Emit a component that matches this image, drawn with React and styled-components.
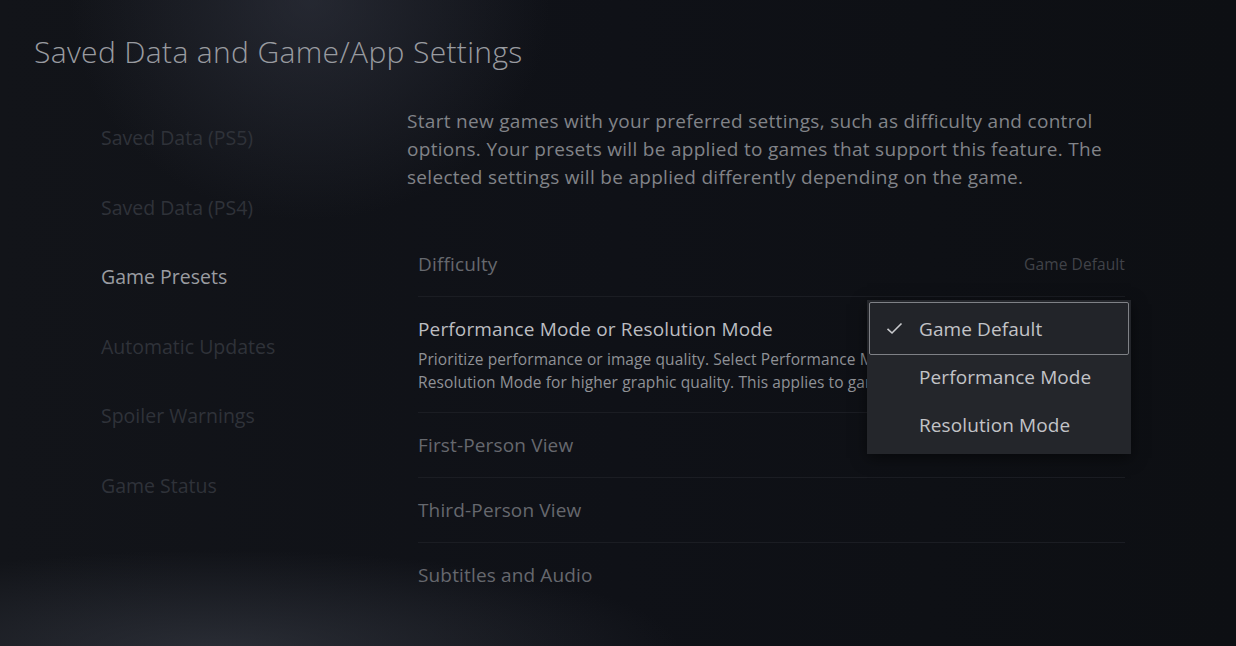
import React from "react";
import styled, { createGlobalStyle } from "styled-components";

const GlobalStyle = createGlobalStyle`
  html, body {
    margin: 0;
    padding: 0;
    background: #0f1116;
  }
  body {
    font-family: "Open Sans", "Liberation Sans", sans-serif;
    -webkit-font-smoothing: antialiased;
  }
`;

const sideItems = [
  { label: "Saved Data (PS5)" },
  { label: "Saved Data (PS4)" },
  { label: "Game Presets", active: true },
  { label: "Automatic Updates" },
  { label: "Spoiler Warnings" },
  { label: "Game Status" },
];

const options = ["Game Default", "Performance Mode", "Resolution Mode"];

const App = () => {
  return (
    <>
      <GlobalStyle />
      <Screen>
        <Title>Saved Data and Game/App Settings</Title>
        <Body>
          <Sidebar>
            {sideItems.map((item) => (
              <SideItem key={item.label} $active={item.active}>
                {item.label}
              </SideItem>
            ))}
          </Sidebar>
          <Main>
            <Intro>
              Start new games with your preferred settings, such as difficulty
              and control options. Your presets will be applied to games that
              support this feature. The selected settings will be applied
              differently depending on the game.
            </Intro>
            <Rows>
              <Row>
                <RowLabel>Difficulty</RowLabel>
                <RowValue>Game Default</RowValue>
              </Row>
              <Row $tall>
                <RowText>
                  <RowLabel $bright>Performance Mode or Resolution Mode</RowLabel>
                  <RowDesc>
                    Prioritize performance or image quality. Select Performance
                    Mode for higher frame rates, or Resolution Mode for higher
                    graphic quality. This applies to games that support it.
                  </RowDesc>
                </RowText>
                <Dropdown>
                  {options.map((opt, i) => (
                    <Option key={opt} $selected={i === 0}>
                      <Check>
                        {i === 0 && (
                          <svg width="17" height="13" viewBox="0 0 17 13">
                            <path
                              d="M1.5 6.8 L6 11 L15.5 1.5"
                              fill="none"
                              stroke="#c9cacd"
                              strokeWidth="1.6"
                            />
                          </svg>
                        )}
                      </Check>
                      {opt}
                    </Option>
                  ))}
                </Dropdown>
              </Row>
              <Row>
                <RowLabel>First-Person View</RowLabel>
              </Row>
              <Row>
                <RowLabel>Third-Person View</RowLabel>
              </Row>
              <Row $last>
                <RowLabel>Subtitles and Audio</RowLabel>
              </Row>
            </Rows>
          </Main>
        </Body>
      </Screen>
    </>
  );
};

const Screen = styled.div`
  width: 1236px;
  height: 646px;
  overflow: hidden;
  box-sizing: border-box;
  padding-top: 32px;
  background:
    radial-gradient(ellipse 240px 220px at 310px 0px, rgba(62, 66, 80, 0.45), transparent 100%),
    radial-gradient(ellipse 460px 100px at 220px 650px, rgba(58, 62, 72, 0.6), transparent 100%),
    linear-gradient(90deg, #121419 0%, #0f1117 50%, #0d0f13 100%);
`;

const Title = styled.h1`
  margin: 0 0 0 34px;
  font-size: 30px;
  font-weight: 300;
  line-height: 40px;
  color: #999ba0;
  letter-spacing: 0.35px;
`;

const Body = styled.div`
  display: grid;
  grid-template-columns: 407px 729px;
  margin-top: 35px;
`;

const Sidebar = styled.nav`
  display: flex;
  flex-direction: column;
  padding-left: 101px;
  padding-top: 18px;
  gap: 43.5px;
`;

const SideItem = styled.div`
  font-size: 19.5px;
  line-height: 26px;
  color: ${(p) => (p.$active ? "#9a9ca1" : "#2f3239")};
`;

const Main = styled.div`
  display: flex;
  flex-direction: column;
`;

const Intro = styled.p`
  margin: 0;
  font-size: 19px;
  line-height: 28px;
  color: #818388;
  letter-spacing: 0.3px;
  max-width: 700px;
`;

const Rows = styled.div`
  display: flex;
  flex-direction: column;
  margin: 41px 11px 0;
`;

const Row = styled.div`
  position: relative;
  display: flex;
  align-items: ${(p) => (p.$tall ? "flex-start" : "center")};
  justify-content: space-between;
  height: ${(p) => (p.$tall ? "116px" : "65px")};
  box-sizing: border-box;
  padding-top: ${(p) => (p.$tall ? "19px" : "0")};
  border-bottom: 1px solid ${(p) => (p.$last ? "transparent" : "#1b1d23")};
`;

const RowText = styled.div`
  display: flex;
  flex-direction: column;
  width: 100%;
`;

const RowLabel = styled.div`
  font-size: 19px;
  line-height: 26px;
  color: ${(p) => (p.$bright ? "#bcbdc1" : "#66686e")};
  letter-spacing: 0.15px;
`;

const RowDesc = styled.div`
  margin-top: 6px;
  font-size: 15.5px;
  line-height: 23px;
  color: #8f9196;
  letter-spacing: 0.1px;
`;

const RowValue = styled.div`
  font-size: 15.5px;
  color: #414349;
  letter-spacing: 0.1px;
`;

const Dropdown = styled.div`
  position: absolute;
  z-index: 2;
  top: 3px;
  right: -6px;
  width: 264px;
  box-sizing: border-box;
  padding: 2px 2px 3px;
  background: #24262b;
  box-shadow: 0 4px 14px rgba(0, 0, 0, 0.5);
  display: flex;
  flex-direction: column;
`;

const Option = styled.div`
  display: flex;
  align-items: center;
  height: ${(p) => (p.$selected ? "53px" : "48px")};
  box-sizing: border-box;
  padding-left: 16px;
  padding-bottom: ${(p) => (p.$selected ? "0" : "4px")};
  border: 1.5px solid ${(p) => (p.$selected ? "#7f8186" : "transparent")};
  border-radius: 2px;
  background: ${(p) => (p.$selected ? "#222429" : "transparent")};
  font-size: 19px;
  color: #c2c3c7;
  letter-spacing: 0.1px;
`;

const Check = styled.span`
  display: inline-flex;
  width: 33px;
  align-items: center;
`;

export default App;
